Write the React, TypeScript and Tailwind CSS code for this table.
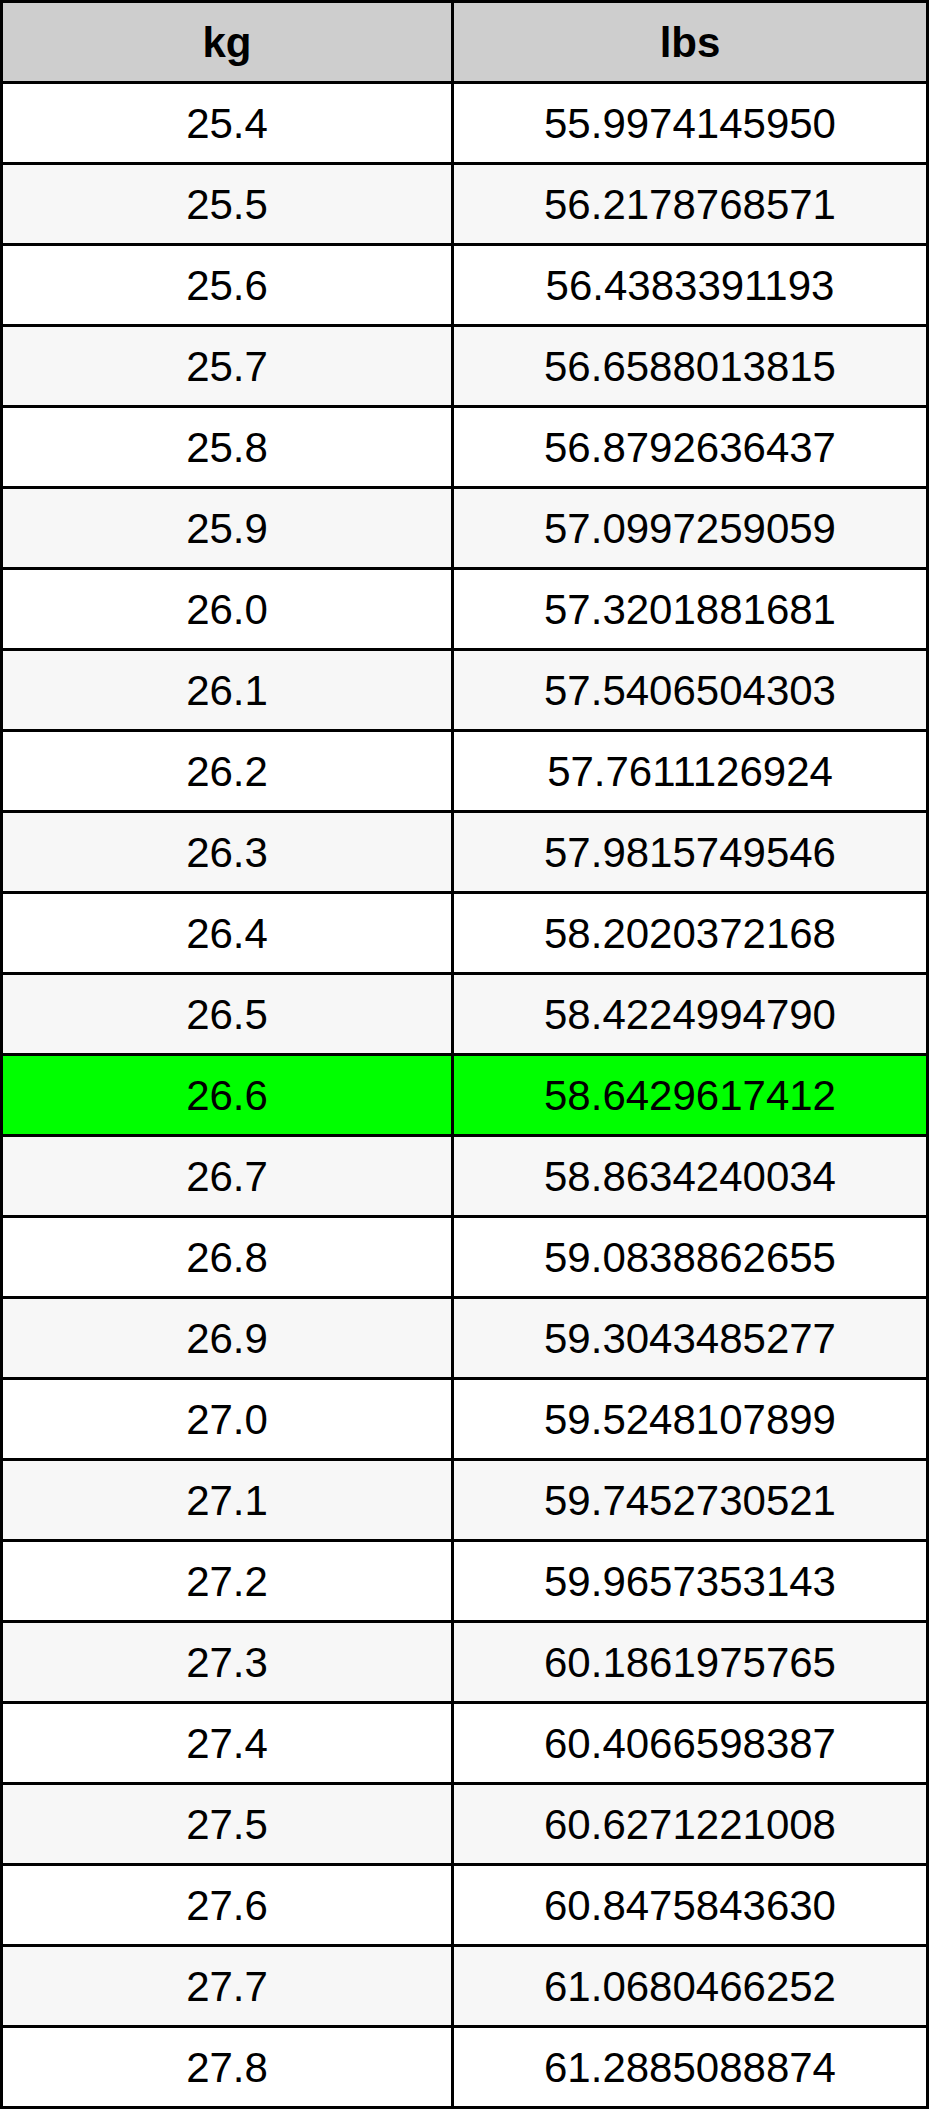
import React from "react";

const rows: [string, string][] = [
  ["25.4", "55.9974145950"],
  ["25.5", "56.2178768571"],
  ["25.6", "56.4383391193"],
  ["25.7", "56.6588013815"],
  ["25.8", "56.8792636437"],
  ["25.9", "57.0997259059"],
  ["26.0", "57.3201881681"],
  ["26.1", "57.5406504303"],
  ["26.2", "57.7611126924"],
  ["26.3", "57.9815749546"],
  ["26.4", "58.2020372168"],
  ["26.5", "58.4224994790"],
  ["26.6", "58.6429617412"],
  ["26.7", "58.8634240034"],
  ["26.8", "59.0838862655"],
  ["26.9", "59.3043485277"],
  ["27.0", "59.5248107899"],
  ["27.1", "59.7452730521"],
  ["27.2", "59.9657353143"],
  ["27.3", "60.1861975765"],
  ["27.4", "60.4066598387"],
  ["27.5", "60.6271221008"],
  ["27.6", "60.8475843630"],
  ["27.7", "61.0680466252"],
  ["27.8", "61.2885088874"],
];

export default function App() {
  return (
    <div className="bg-white w-[930px] h-[2115px]" style={{ fontFamily: '"Liberation Sans", Arial, sans-serif' }}>
      <div className="w-[929px] grid grid-cols-[448px_472px] gap-[3px] bg-black border-[3px] border-black text-[42px] text-black">
        <div className="h-[78px] bg-[#cecece] flex items-center justify-center font-bold">kg</div>
        <div className="h-[78px] bg-[#cecece] flex items-center justify-center font-bold">lbs</div>
        {rows.map(([kg, lbs], i) => {
          const bg = kg === "26.6" ? "bg-[#00ff00]" : i % 2 === 0 ? "bg-white" : "bg-[#f7f7f7]";
          return (
            <React.Fragment key={kg}>
              <div className={`h-[78px] ${bg} flex items-center justify-center`}>{kg}</div>
              <div className={`h-[78px] ${bg} flex items-center justify-center`}>{lbs}</div>
            </React.Fragment>
          );
        })}
      </div>
    </div>
  );
}
